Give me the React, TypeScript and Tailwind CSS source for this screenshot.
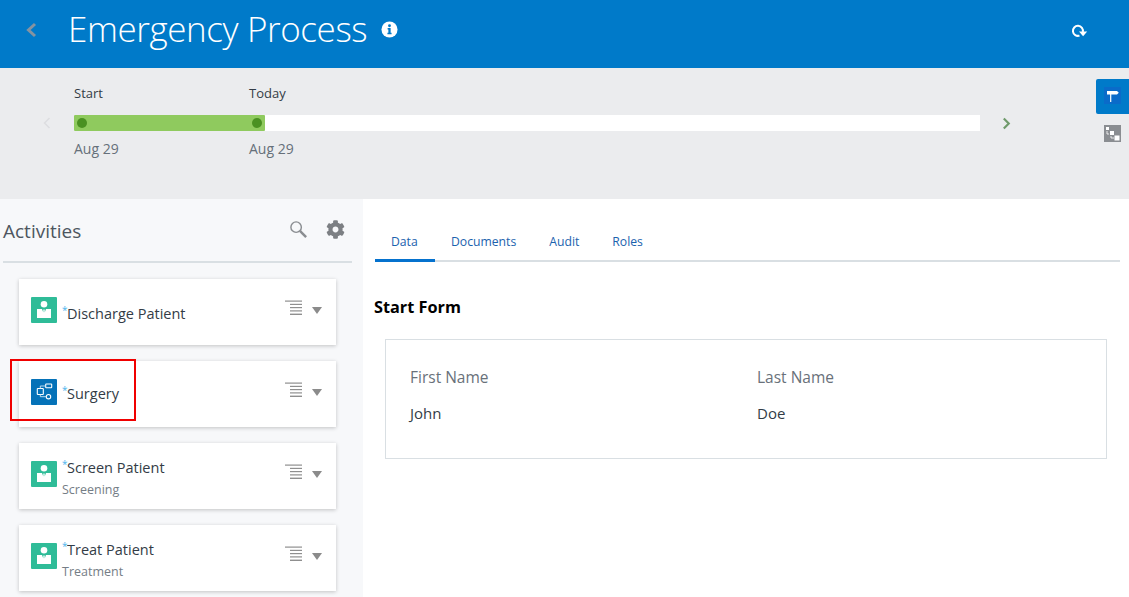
import { FaCog } from "react-icons/fa";

function PersonIcon() {
  return (
    <svg viewBox="0 0 26 26" className="w-[26px] h-[26px] shrink-0">
      <rect width="26" height="26" rx="1" fill="#2fbc98" />
      <circle cx="13" cy="7.200" r="3.300" fill="#fff" />
      <path d="M6 12h5l1.300 3.500v-3h1.400v3L15 12h5v9H6z" fill="#fff" />
    </svg>
  );
}

function ProcessIcon() {
  return (
    <svg viewBox="0 0 26 26" className="w-[26px] h-[26px] shrink-0" fill="none" stroke="#fff" strokeWidth="1.100">
      <rect width="26" height="26" rx="1" fill="#0572b8" stroke="none" />
      <rect x="14.700" y="5" width="6" height="3.800" rx="0.600" />
      <rect x="6.300" y="9.500" width="6" height="6" rx="0.600" />
      <circle cx="17.500" cy="17.700" r="2.200" />
      <path d="M14.700 7h-5.400v2.500M9.300 15.500v2.200h5.900" stroke="#cfe6f5" strokeWidth="0.900" />
    </svg>
  );
}

function ListIcon() {
  return (
    <svg viewBox="0 0 18 16" className="w-[18px] h-[16px]" fill="#8f8f8f">
      <rect x="0" y="0.500" width="17" height="1.200" />
      <rect x="5" y="3.800" width="12" height="1.200" />
      <rect x="5" y="7" width="12" height="1.200" />
      <rect x="5" y="10.300" width="12" height="1.200" />
      <rect x="5" y="13.600" width="12" height="1.400" />
    </svg>
  );
}

function Card({ icon, title, sub, titleTop = "mt-[5px]" }: { icon: "person" | "process"; title: string; sub?: string; titleTop?: string }) {
  return (
    <div className="h-[66px] ml-[19px] w-[317px] mb-4 bg-white shadow-[0_1px_4px_rgba(0,0,0,0.22)] flex items-start pl-3 pr-[14px] pt-[18px]">
      {icon === "person" ? <PersonIcon /> : <ProcessIcon />}
      <div className={"ml-[5px] flex-1 " + (sub ? "-mt-[3px]" : "mt-[1px]")}>
        <div className={"text-[14.500px] leading-[20px] text-[#333c46] " + (sub ? "" : titleTop)}>
          <span className="inline-block w-[5px] text-[10px] leading-[12px] align-top text-[#4db4ec]">*</span>
          {title}
        </div>
        {sub && <div className="text-[12.500px] leading-[18px] mt-[3px] text-[#757d86]">{sub}</div>}
      </div>
      <div className="flex items-start gap-[9px] mt-[3px] ml-auto">
        <ListIcon />
        <svg viewBox="0 0 10 7" className="w-[10px] h-[7px] mt-[7px]">
          <path d="M0 0h10l-5 7z" fill="#8b8b8b" />
        </svg>
      </div>
    </div>
  );
}

export default function App() {
  return (
    <div className="relative w-[1129px] h-[597px] overflow-hidden bg-white font-['Open_Sans','Noto_Sans',sans-serif]">
      {/* header */}
      <header className="h-[68px] bg-[#007ac9] flex items-center pl-[25px] pr-[41px] text-white">
        <svg viewBox="0 0 12 16" className="w-[12px] h-[16px] mr-[31px] -mt-[8px]" fill="none">
          <path d="M10 2 3.500 8l6.500 6" stroke="#8593a0" strokeWidth="3" />
        </svg>
        <h1 className="text-[35px] leading-[40px] font-light -mt-[11px] tracking-[-0.4px]">Emergency Process</h1>
        <svg viewBox="0 0 18 18" className="w-[17px] h-[17px] ml-[14px] -mt-[9px]">
          <circle cx="9" cy="9" r="8.500" fill="#fff" />
          <circle cx="9" cy="5" r="1.500" fill="#007ac9" />
          <path d="M7 7.500h3.200v5h1v1.500h-4.400v-1.500h1v-3.500h-.8z" fill="#007ac9" />
        </svg>
        <svg viewBox="0 0 18 16" className="w-[18px] h-[16px] ml-auto -mt-[6px]" fill="none">
          <path d="M9.500 12.600A5 5 0 1 1 12.800 9" stroke="#fff" strokeWidth="2" />
          <path d="M9 8.500h8.200l-4.100 4.800z" fill="#fff" />
        </svg>
      </header>

      {/* timeline */}
      <section className="h-[131px] bg-[#ebecee] flex">
        <div className="w-[1020px]">
          <div className="flex pl-[74px] pt-[16px] text-[13px] leading-[18px] text-[#333c46]">
            <div className="w-[175px]">Start</div>
            <div>Today</div>
          </div>
          <div className="flex items-center mt-[13px]">
            <div className="w-[74px] flex justify-end pr-[23px]">
              <svg viewBox="0 0 8 12" className="w-[8px] h-[12px]" fill="none">
                <path d="M6.500 1 1.500 6l5 5" stroke="#dcdde0" strokeWidth="1.500" />
              </svg>
            </div>
            <div className="w-[906px] h-4 bg-white">
              <div className="w-[191px] h-4 bg-[#8fca5e] flex items-center justify-between px-[3px] rounded-[1px]">
                <span className="w-[10px] h-[10px] rounded-full bg-[#4a9122]" />
                <span className="w-[10px] h-[10px] rounded-full bg-[#4a9122]" />
              </div>
            </div>
            <svg viewBox="0 0 10 14" className="w-[9px] h-[13px] ml-[22px]" fill="none">
              <path d="M2 1.500 7.500 7 2 12.500" stroke="#6f9a6b" strokeWidth="2.400" />
            </svg>
          </div>
          <div className="flex pl-[74px] mt-[9px] text-[14px] leading-[18px] text-[#66707a]">
            <div className="w-[175px]">Aug 29</div>
            <div>Aug 29</div>
          </div>
        </div>
        <div className="ml-auto w-[33px] pt-[11px]">
          <div className="h-[35px] bg-[#007ac9] rounded-l-[2px] flex items-center justify-center pr-[1px] pb-[3px]">
            <svg viewBox="0 0 17 17" className="w-[17px] h-[17px]">
              <rect width="17" height="17" fill="#0a6bc9" />
              <path d="M3 4h10l1.800 1.800L13 7.600H7.300V15H6.100V7.600H3z" fill="#fff" />
            </svg>
          </div>
          <div className="mt-[11px] flex justify-center">
            <svg viewBox="0 0 17 17" className="w-[17px] h-[17px]">
              <rect width="17" height="17" fill="#8a8d91" />
              <rect x="2" y="2" width="3" height="3" fill="#fff" />
              <rect x="6" y="6" width="4" height="4" fill="#fff" />
              <rect x="10.500" y="10.500" width="5" height="5" fill="#fff" />
              <path d="M3 6v3h2M7 11v2h3" stroke="#fff" strokeWidth="0.800" fill="none" />
            </svg>
          </div>
        </div>
      </section>

      <div className="flex h-[398px]">
        {/* activities */}
        <aside className="w-[363px] bg-[#f7f8fa] overflow-hidden">
          <div className="h-[64px] mx-[3px] w-[349px] border-b-2 border-[#d9dfe3] flex items-center pr-[7px]">
            <h2 className="text-[19px] text-[#4d5660] leading-[24px] mt-[1px]">Activities</h2>
            <svg viewBox="0 0 20 20" className="w-[19px] h-[19px] ml-auto mr-[18px] -mt-[2px]" fill="none">
              <circle cx="7.500" cy="7.500" r="5.500" stroke="#8a8d91" strokeWidth="1.500" />
              <path d="M11.500 11.500 18 18" stroke="#8a8d91" strokeWidth="2.600" />
            </svg>
            <FaCog className="w-[19px] h-[19px] text-[#7c7f83] -mt-[2px]" />
          </div>
          <div className="pt-4">
            <Card icon="person" title="Discharge Patient" titleTop="mt-[6px]" />
            <Card icon="process" title="Surgery" titleTop="mt-[4px]" />
            <Card icon="person" title="Screen Patient" sub="Screening" />
            <Card icon="person" title="Treat Patient" sub="Treatment" />
          </div>
        </aside>

        {/* detail */}
        <main className="flex-1 pl-[12px] pr-[9px]">
          <nav className="flex mt-[28px] h-[35px] border-b-2 border-[#d9dfe3] text-[12.200px] text-[#1b62ae]">
            <a className="w-[60px] pl-4 pt-[6px] h-[35px] border-b-[3px] border-[#0572ce]">Data</a>
            <a className="pl-4 pr-[17px] pt-[6px]">Documents</a>
            <a className="pl-4 pr-[17px] pt-[6px]">Audit</a>
            <a className="pl-4 pt-[6px]">Roles</a>
          </nav>
          <h3 className="mt-[33px] -ml-[1px] text-[16.300px] leading-[24px] font-bold text-black">Start Form</h3>
          <div className="mt-[20px] ml-[10px] mr-[13px] h-[120px] border border-[#d9dfe3] pl-6 pt-[27px] grid grid-cols-[347px_1fr] text-[15px] leading-[20px]">
            <div>
              <div className="text-[15.500px] text-[#69717a]">First Name</div>
              <div className="mt-4 text-[#333c46]">John</div>
            </div>
            <div>
              <div className="text-[15.500px] text-[#69717a]">Last Name</div>
              <div className="mt-4 text-[#333c46]">Doe</div>
            </div>
          </div>
        </main>
      </div>

      {/* red annotation over the Surgery row */}
      <div className="absolute left-[10px] top-[359px] w-[126px] h-[62px] border-2 border-[#f00000]" />
    </div>
  );
}
